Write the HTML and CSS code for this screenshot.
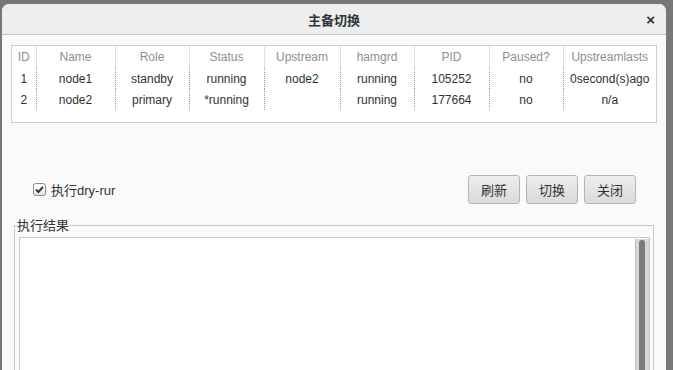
FILE: index.html
```html
<!DOCTYPE html>
<html lang="zh-CN">
<head>
  <meta charset="UTF-8" />
  <meta name="viewport" content="width=device-width, initial-scale=1.0"/>
  <title>主备切换</title>
  <link rel="stylesheet" href="styles.css">
</head>
<body>

  <div class="window">
    <div class="titlebar">
      <span></span>
      <span class="title">主备切换</span>
      <span class="close">×</span>
    </div>

    <div class="content">
      <div class="table-box">
        <table class="nodes">
          <colgroup>
            <col style="width:24px"><col style="width:79px"><col style="width:74px">
            <col style="width:75px"><col style="width:76px"><col style="width:74px">
            <col style="width:75px"><col style="width:74px"><col style="width:93px">
          </colgroup>
          <thead>
            <tr>
              <th>ID</th><th>Name</th><th>Role</th><th>Status</th><th>Upstream</th>
              <th>hamgrd</th><th>PID</th><th>Paused?</th><th>Upstreamlasts</th>
            </tr>
          </thead>
          <tbody>
            <tr>
              <td>1</td><td>node1</td><td>standby</td><td>running</td><td>node2</td>
              <td>running</td><td>105252</td><td>no</td><td>0second(s)ago</td>
            </tr>
            <tr>
              <td>2</td><td>node2</td><td>primary</td><td>*running</td><td></td>
              <td>running</td><td>177664</td><td>no</td><td>n/a</td>
            </tr>
          </tbody>
        </table>
      </div>

      <div class="actions">
        <label class="check">
          <span class="box">
            <svg width="11" height="11" viewBox="0 0 11 11"><path d="M2 5.6 L4.4 8 L9 2.8" fill="none" stroke="#2e3436" stroke-width="2"/></svg>
          </span>
          执行dry-rur
        </label>
        <div class="buttons">
          <button>刷新</button>
          <button>切换</button>
          <button>关闭</button>
        </div>
      </div>

      <fieldset class="result">
        <legend>执行结果</legend>
        <div class="output">
          <div class="scroll"><div class="thumb"></div></div>
        </div>
      </fieldset>
    </div>
  </div>

</body>
</html>
```

FILE: styles.css
```css
html, body {
  margin: 0;
  height: 100%;
  overflow: hidden;
}
body {
  background: #777777;
  font-family: "Liberation Sans", "Noto Sans CJK SC", sans-serif;
  color: #2e3436;
}
.window {
  margin: 4px 7px 0 2px;
  height: 366px;
  background: #fafafa;
  border-radius: 7px 7px 0 0;
  overflow: hidden;
}
.titlebar {
  display: grid;
  grid-template-columns: 1fr auto 1fr;
  align-items: center;
  height: 30px;
  background: #ededed;
  border-bottom: 1px solid #c6c6c6;
}
.title {
  font-weight: bold;
  font-size: 13px;
}
.close {
  justify-self: end;
  margin-right: 11px;
  font-size: 15px;
  font-weight: bold;
}
.content {
  padding: 10px 9px 0 9px;
}
.table-box {
  height: 76px;
  background: #fff;
  border: 1px solid #cfcfcf;
}
.nodes {
  width: 100%;
  border-collapse: collapse;
  table-layout: fixed;
  font-size: 12px;
}
.nodes th {
  height: 22px;
  padding: 0;
  font-weight: normal;
  color: #8e8e8e;
  border-left: 1px solid #e2e2e2;
}
.nodes td {
  height: 21px;
  padding: 0;
  text-align: center;
  border-left: 1px dotted #9a9a9a;
}
.nodes th:first-child,
.nodes td:first-child {
  border-left: none;
}
.actions {
  display: flex;
  justify-content: space-between;
  align-items: center;
  margin-top: 52px;
  padding: 0 21px 0 22px;
}
.check {
  display: flex;
  align-items: center;
  gap: 5px;
  font-size: 13px;
}
.box {
  display: flex;
  align-items: center;
  justify-content: center;
  width: 11px;
  height: 11px;
  border: 1px solid #8c8c8c;
  border-radius: 3px;
  background: linear-gradient(#ffffff, #e6e6e6);
}
.buttons {
  display: flex;
  gap: 6px;
}
button {
  width: 52px;
  height: 29px;
  padding: 0;
  border: 1px solid #b4b4b4;
  border-radius: 3px;
  background: linear-gradient(#eeeeee, #dadada);
  font-family: inherit;
  font-size: 13px;
  color: #2e3436;
}
.result {
  margin: 14px 3px 0 3px;
  padding: 4px 3px 0 4px;
  border: 1px solid #c8c8c8;
  min-width: 0;
}
.result legend {
  padding: 0;
  margin-left: -2px;
  font-size: 13px;
  line-height: 15px;
}
.output {
  height: 200px;
  display: flex;
  justify-content: flex-end;
  background: #fff;
  border: 1px solid #c6c6c6;
}
.scroll {
  width: 9px;
  margin: 1px 0 0 0;
  padding: 1px 2px 0 2px;
  background: #d8d8d8;
  border-left: 1px solid #c0c0c0;
}
.thumb {
  width: 6px;
  margin-left: 1px;
  height: 100%;
  background: #7c7c7c;
  border-radius: 3px 3px 0 0;
}
```
